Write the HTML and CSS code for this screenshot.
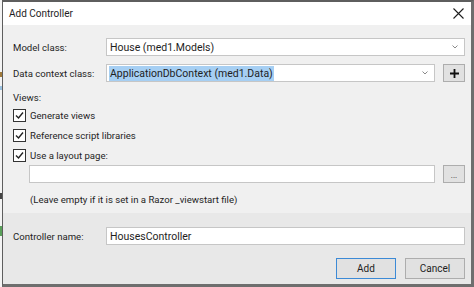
FILE: index.html
```html
<!DOCTYPE html>
<html lang="en">
<head>
  <meta charset="UTF-8">
  <title>Add Controller</title>
  <link rel="stylesheet" href="styles.css">
</head>
<body>
  <div class="desk">
    <!-- strip of the window behind -->
    <div class="behind">
      <span class="mark mark-brown"></span>
      <span class="mark mark-blue"></span>
      <span class="mark mark-dark"></span>
      <span class="mark mark-green"></span>
    </div>

    <div class="dialog">
      <div class="titlebar">
        <span class="title">Add Controller</span>
        <svg class="close" width="11" height="11" viewBox="0 0 11 11">
          <path d="M0.5 0.5 L10.5 10.5 M10.5 0.5 L0.5 10.5" stroke="#1e1e1e" stroke-width="1.1" fill="none"/>
        </svg>
      </div>

      <div class="body">
        <div class="row row-model">
          <label class="label">Model class:</label>
          <div class="field select grow">
            <span>House (med1.Models)</span>
            <svg class="chev" width="6" height="4" viewBox="0 0 6 4"><path d="M0.5 0.5 L3 3 L5.5 0.5" stroke="#8a8a8a" fill="none"/></svg>
          </div>
        </div>

        <div class="row row-data">
          <label class="label">Data context class:</label>
          <div class="field select grow">
            <span class="selected">ApplicationDbContext (med1.Data)</span>
            <svg class="chev" width="6" height="4" viewBox="0 0 6 4"><path d="M0.5 0.5 L3 3 L5.5 0.5" stroke="#8a8a8a" fill="none"/></svg>
          </div>
          <button class="btn small plus">
            <svg width="9" height="9" viewBox="0 0 9 9"><path d="M4.5 0 V9 M0 4.5 H9" stroke="#111" stroke-width="1.8"/></svg>
          </button>
        </div>

        <div class="views">Views:</div>

        <div class="check"><span class="box"><svg width="9" height="9" viewBox="0 0 9 9"><path d="M1 4.5 L3.5 7 L8 1.5" stroke="#222" stroke-width="1.4" fill="none"/></svg></span>Generate views</div>
        <div class="check"><span class="box"><svg width="9" height="9" viewBox="0 0 9 9"><path d="M1 4.5 L3.5 7 L8 1.5" stroke="#222" stroke-width="1.4" fill="none"/></svg></span>Reference script libraries</div>
        <div class="check"><span class="box"><svg width="9" height="9" viewBox="0 0 9 9"><path d="M1 4.5 L3.5 7 L8 1.5" stroke="#222" stroke-width="1.4" fill="none"/></svg></span>Use a layout page:</div>

        <div class="row row-layout">
          <div class="field grow"></div>
          <button class="btn small dots">...</button>
        </div>
        <div class="hint">(Leave empty if it is set in a Razor _viewstart file)</div>
      </div>

      <div class="footer">
        <div class="row row-name">
          <label class="label">Controller name:</label>
          <div class="field grow">HousesController</div>
        </div>
        <div class="actions">
          <button class="btn wide default">Add</button>
          <button class="btn wide">Cancel</button>
        </div>
      </div>
    </div>
  </div>
</body>
</html>
```

FILE: styles.css
```css
body {
  margin: 0;
  font-family: Roboto, "Noto Sans", sans-serif;
  font-size: 9.6px;
  color: #1e1e1e;
  background: #ffffff;
}
.desk {
  display: flex;
  width: 474px;
  height: 287px;
  overflow: hidden;
}
.behind {
  position: relative;
  width: 2px;
  background: #f4f4f4;
}
.mark {
  position: absolute;
  left: 0;
  width: 2px;
}
.mark-brown { top: 72px; height: 5px; background: #a07a3a; }
.mark-blue { top: 86px; height: 4px; background: #9cc2e0; }
.mark-dark { top: 193px; height: 6px; background: #444; }
.mark-green { top: 226px; height: 10px; background: #5aa05a; }

.dialog {
  flex: 1;
  display: flex;
  flex-direction: column;
  border-top: 2px solid #5e5e5e;
  border-left: 1px solid #5e5e5e;
  border-right: 3px solid #6e6e6e;
  border-bottom: 3px solid #6e6e6e;
  background: #f0f0f0;
}
.titlebar {
  height: 23px;
  background: #fff;
  display: flex;
  align-items: center;
  justify-content: space-between;
  padding: 0 7px 0 6px;
}
.title {
  font-size: 10px;
}
.body {
  padding: 13px 6px 0 10px;
  height: 175px;
}
.row {
  display: flex;
  align-items: center;
}
.label {
  width: 93px;
  flex: none;
}
.field {
  height: 16px;
  background: #fff;
  border: 1px solid #c6c6c6;
  display: flex;
  align-items: center;
  padding: 0 3px;
  white-space: nowrap;
  font-size: 10.5px;
}
.grow { flex: 1; }
.select {
  justify-content: space-between;
}
.chev {
  margin-right: 3px;
}
.selected {
  background: #a6cff3;
  padding: 1px 1px;
  margin-left: -1px;
}
.row-data {
  margin-top: 8px;
}
.btn {
  font-family: inherit;
  font-size: 10px;
  color: #1e1e1e;
  background: #e1e1e1;
  border: 1px solid #adadad;
  padding: 0;
  flex: none;
}
.small {
  width: 22px;
  height: 18px;
  margin-left: 8px;
  display: flex;
  align-items: center;
  justify-content: center;
}
.dots {
  font-size: 8px;
  line-height: 1;
  padding-top: 4px;
}
.views {
  margin-top: 9px;
  height: 14px;
  line-height: 14px;
}
.check {
  display: flex;
  align-items: center;
  height: 19px;
  margin-top: 1px;
}
.box {
  width: 11px;
  height: 11px;
  border: 1px solid #333;
  background: #fff;
  margin: 0 4px 0 0;
  display: flex;
  align-items: center;
  justify-content: center;
}
.row-layout {
  margin-top: 0;
  padding-left: 16px;
}
.hint {
  padding-left: 17px;
  margin-top: 11px;
}
.footer {
  flex: 1;
  background: #e8e8e8;
  padding: 14px 6px 0 10px;
}
.actions {
  display: flex;
  justify-content: flex-end;
  gap: 9px;
  margin-top: 13px;
}
.wide {
  width: 60px;
  height: 21px;
}
.default {
  border-color: #3c8ad6;
}
```
